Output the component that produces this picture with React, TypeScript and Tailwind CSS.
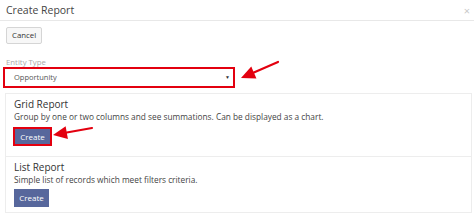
import React from "react";

function RedArrow({ x1, y1, x2, y2 }: { x1: number; y1: number; x2: number; y2: number }) {
  // shaft from (x1,y1) to the tip (x2,y2), with a filled head
  const a = Math.atan2(y2 - y1, x2 - x1);
  const len = 14;
  const w = 6.5;
  const bx = x2 - Math.cos(a) * len;
  const by = y2 - Math.sin(a) * len;
  const p1 = `${bx + Math.sin(a) * w},${by - Math.cos(a) * w}`;
  const p2 = `${bx - Math.sin(a) * w},${by + Math.cos(a) * w}`;
  return (
    <g>
      <line x1={x1} y1={y1} x2={bx} y2={by} stroke="#e3000f" strokeWidth={2.2} strokeLinecap="round" />
      <polygon points={`${x2},${y2} ${p1} ${p2}`} fill="#e3000f" />
    </g>
  );
}

export default function App() {
  return (
    <div className="relative w-[474px] h-[219px] overflow-hidden bg-white text-[#333] leading-none font-['Open_Sans',sans-serif]">
      {/* Header */}
      <div className="flex items-center justify-between h-[21px] pl-[6px] pr-[4px] border-b border-[#e8e8e8]">
        <span className="text-[10.5px] text-[#444]">Create Report</span>
        <span className="text-[11px] text-[#c8c8c8]">×</span>
      </div>

      <div className="flex flex-col items-start px-[5px] pt-[6px]">
        <button className="block ml-[1px] h-[17px] px-[5px] text-[7.8px] leading-none text-[#333] bg-[#f7f7f7] border border-[#d5d5d5] rounded-[2px]">
          Cancel
        </button>

        <div className="mt-[13px] pl-[1px] h-[10px] text-[7.8px] leading-[11px] text-[#aaa]">Entity Type</div>
        <div className="-ml-[2px] w-[232px] h-[21px] border-[2.5px] border-[#e3000f] bg-white flex items-center justify-between pl-[9px] pr-[3px]">
          <span className="text-[7.5px] text-[#555]">Opportunity</span>
          <span className="text-[5px] text-[#333]">▼</span>
        </div>

        <div className="mt-[5px] w-[467px] border border-[#ededed]">
          <div className="h-[63px] pl-[8px] pt-[3px] border-b border-[#ededed]">
            <div className="text-[10px] leading-[14px] text-[#333]">Grid Report</div>
            <div className="text-[8.3px] leading-[11px] text-[#444]">
              Group by one or two columns and see summations. Can be displayed as a chart.
            </div>
            <div className="mt-[5px] w-[39px] h-[19px] -ml-[1px] border-2 border-[#e3000f] flex">
              <button className="flex-1 bg-[#57679c] text-white text-[8px] leading-none">Create</button>
            </div>
          </div>
          <div className="h-[55px] pl-[8px] pt-[3px]">
            <div className="text-[10px] leading-[14px] text-[#333]">List Report</div>
            <div className="text-[8.3px] leading-[11px] text-[#444]">Simple list of records which meet filters criteria.</div>
            <button className="block mt-[4px] w-[35px] h-[18px] bg-[#57679c] text-white text-[8px] leading-none">Create</button>
          </div>
        </div>
      </div>

      {/* annotation arrows */}
      <svg className="absolute inset-0 pointer-events-none" width={474} height={219}>
        <RedArrow x1={278} y1={62} x2={241} y2={78} />
        <RedArrow x1={92} y1={128} x2={53} y2={135} />
      </svg>
    </div>
  );
}
